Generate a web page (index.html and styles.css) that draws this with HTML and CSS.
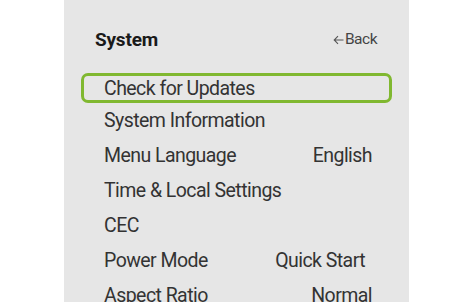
FILE: index.html
```html
<!DOCTYPE html>
<html>
<head>
<meta charset="utf-8">
<link rel="stylesheet" href="styles.css">
</head>
<body>
<div class="panel">
  <div class="header">
    <span class="title">System</span>
    <span class="back"><svg class="arrow" width="11" height="10" viewBox="0 0 11 10"><path d="M10.5 5H1.2M5 1.2L1.2 5L5 8.8" fill="none" stroke="#555" stroke-width="1.1"/></svg>Back</span>
  </div>
  <ul class="menu">
    <li class="item selected"><span>Check for Updates</span></li>
    <li class="item"><span>System Information</span></li>
    <li class="item"><span>Menu Language</span><span class="value">English</span></li>
    <li class="item"><span>Time &amp; Local Settings</span></li>
    <li class="item"><span>CEC</span></li>
    <li class="item"><span>Power Mode</span><span class="value inset">Quick Start</span></li>
    <li class="item"><span>Aspect Ratio</span><span class="value">Normal</span></li>
  </ul>
</div>
</body>
</html>
```

FILE: styles.css
```css
html, body {
  margin: 0;
  padding: 0;
  background: #ffffff;
  height: 302px;
  overflow: hidden;
}
body {
  font-family: Roboto, "Liberation Sans", sans-serif;
  color: #333333;
}
.panel {
  margin-left: 64px;
  width: 345px;
  height: 302px;
  background: #e6e6e6;
  overflow: hidden;
}
.header {
  display: flex;
  justify-content: space-between;
  align-items: center;
  height: 40px;
  padding: 19px 32px 0 31px;
}
.title {
  font-weight: 700;
  font-size: 19px;
  color: #1a1a1a;
  letter-spacing: -0.2px;
}
.back {
  display: flex;
  align-items: center;
  font-size: 15.5px;
  color: #444;
  letter-spacing: -0.5px;
}
.arrow {
  margin-right: 1px;
  margin-top: 1px;
}
.menu {
  list-style: none;
  margin: 14px 17px 0 17px;
  padding: 0;
}
.item {
  display: flex;
  justify-content: space-between;
  align-items: center;
  height: 35px;
  padding: 0 20px 0 23px;
  font-size: 19.5px;
  letter-spacing: -0.55px;
  box-sizing: border-box;
}
.item.selected {
  height: 30px;
  border: 3px solid #80b830;
  border-radius: 7px;
  padding: 0 17px 0 20px;
}
.value.inset {
  margin-right: 7px;
}
```
